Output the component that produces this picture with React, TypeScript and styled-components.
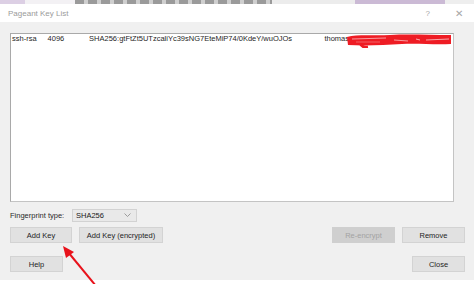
import { FC } from "react";
import styled, { createGlobalStyle } from "styled-components";

const GlobalStyle = createGlobalStyle`
  html, body {
    margin: 0;
    padding: 0;
    background: #ffffff;
  }
  body {
    font-family: "Liberation Sans", Arial, sans-serif;
    -webkit-font-smoothing: antialiased;
  }
`;

type Segment = { width: number; fill: string };

// blurred desktop strip above the dialog
const backdrop: Segment[] = [
  { width: 25, fill: "#dccfe4" },
  { width: 50, fill: "#f3f1f4" },
  {
    width: 197,
    fill: "repeating-linear-gradient(90deg, #9a9a9a 0 9px, #cfcfcf 9px 13px)",
  },
  { width: 83, fill: "#ececec" },
  { width: 90, fill: "#cbbad5" },
  { width: 29, fill: "#eeeeee" },
];

type Key = { type: string; bits: string; fingerprint: string; comment: string };

const keys: Key[] = [
  {
    type: "ssh-rsa",
    bits: "4096",
    fingerprint: "SHA256:gtFtZt5UTzcaliYc39sNG7EteMiP74/0KdeY/wuOJOs",
    comment: "thomas",
  },
];

const Scribble: FC = () => (
  <SScribble width="106" height="14" viewBox="0 0 106 14">
    <path
      d="M1 3 C12 0 28 2 44 1 C62 0 82 1 105 1 L105 10 C88 11 72 9 56 10 C38 11 20 12 2 11 Z"
      fill="#ee1c24"
    />
    <path d="M14 9 Q16 14 22 13" stroke="#ee1c24" strokeWidth="3" fill="none" />
    <path d="M6 5 L40 4" stroke="#ffffff" strokeWidth="0.8" opacity="0.7" />
    <path d="M10 8 L34 8" stroke="#ffffff" strokeWidth="0.6" opacity="0.5" />
    <path d="M48 6 L62 7" stroke="#ffffff" strokeWidth="0.8" opacity="0.7" />
    <path d="M70 5 L74 6" stroke="#ffffff" strokeWidth="0.8" opacity="0.8" />
    <path d="M80 6 L103 5" stroke="#ffffff" strokeWidth="1" opacity="0.6" />
  </SScribble>
);

const Arrow: FC = () => (
  <SOverlay width="474" height="284" viewBox="0 0 474 284">
    <path d="M96 286 L68 252" stroke="#e8121b" strokeWidth="2" />
    <path d="M63 246 L74 252 L66 258 Z" fill="#e8121b" />
  </SOverlay>
);

export default function App() {
  return (
    <>
      <GlobalStyle />
      <SPage>
        <SBackdrop>
          {backdrop.map((s, i) => (
            <SBackdropPiece key={i} $width={s.width} $fill={s.fill} />
          ))}
        </SBackdrop>
        <STitleBar>
          <STitle>Pageant Key List</STitle>
          <STitleControls>
            <STitleGlyph>?</STitleGlyph>
            <STitleGlyph $large>✕</STitleGlyph>
          </STitleControls>
        </STitleBar>
        <SClient>
          <SKeyList>
            {keys.map((k) => (
              <SKeyRow key={k.fingerprint}>
                <SCell $width={36}>{k.type}</SCell>
                <SCell $width={42}>{k.bits}</SCell>
                <SCell $width={238}>{k.fingerprint}</SCell>
                <SCell>
                  {k.comment}
                  <Scribble />
                </SCell>
              </SKeyRow>
            ))}
          </SKeyList>
          <SFingerprintRow>
            <SLabel>Fingerprint type:</SLabel>
            <SSelect>
              <span>SHA256</span>
              <SChevron width="7" height="4" viewBox="0 0 7 4">
                <path d="M0.5 0.5 L3.5 3.5 L6.5 0.5" stroke="#888" strokeWidth="0.8" fill="none" />
              </SChevron>
            </SSelect>
          </SFingerprintRow>
          <SButtonRow $gap={5}>
            <SButton $width={62}>Add Key</SButton>
            <SButton $width={84}>Add Key (encrypted)</SButton>
            <SSpacer />
            <SButton $width={63} disabled>
              Re-encrypt
            </SButton>
            <SButton $width={63}>Remove</SButton>
          </SButtonRow>
          <SButtonRow $gap={13}>
            <SButton $width={53}>Help</SButton>
            <SSpacer />
            <SButton $width={53}>Close</SButton>
          </SButtonRow>
        </SClient>
        <Arrow />
      </SPage>
    </>
  );
}

const SPage = styled.div`
  position: relative;
  width: 474px;
  height: 284px;
  overflow: hidden;
  background: #ffffff;
  display: flex;
  flex-direction: column;
`;

const SBackdrop = styled.div`
  display: flex;
  height: 4px;
`;

const SBackdropPiece = styled.div<{ $width: number; $fill: string }>`
  width: ${(p) => p.$width}px;
  background: ${(p) => p.$fill};
  filter: blur(0.4px);
`;

const STitleBar = styled.div`
  height: 18px;
  display: flex;
  align-items: center;
  justify-content: space-between;
  padding: 0 8px 0 8px;
  background: #ffffff;
`;

const STitle = styled.span`
  font-family: "Liberation Sans", Arial, sans-serif;
  font-size: 8px;
  color: #9b9b9b;
`;

const STitleControls = styled.div`
  display: flex;
  align-items: center;
  gap: 25px;
  padding-right: 3px;
`;

const STitleGlyph = styled.span<{ $large?: boolean }>`
  font-size: ${(p) => (p.$large ? "10px" : "8px")};
  color: #a6a6a6;
  font-weight: 300;
`;

const SClient = styled.div`
  height: 258px;
  box-sizing: border-box;
  background: #f0f0f0;
  padding: 11px 9px 0 10px;
  display: flex;
  flex-direction: column;
`;

const SKeyList = styled.div`
  height: 169px;
  margin-right: 11px;
  box-sizing: border-box;
  background: #ffffff;
  border: 1px solid #c4c4c4;
  border-left-color: #a9a9a9;
  border-top-color: #a9a9a9;
  padding: 0 1px;
`;

const SKeyRow = styled.div`
  display: flex;
  align-items: center;
  height: 9px;
  font-size: 7.5px;
  color: #262626;
`;

const SCell = styled.div<{ $width?: number }>`
  display: flex;
  align-items: center;
  white-space: nowrap;
  ${(p) => (p.$width ? `width: ${p.$width}px;` : "flex: 1;")}
`;

const SScribble = styled.svg`
  display: block;
  margin-left: -3px;
  margin-top: 4px;
  flex-shrink: 0;
`;

const SFingerprintRow = styled.div`
  display: flex;
  align-items: center;
  margin-top: 6px;
  height: 14px;
`;

const SLabel = styled.span`
  width: 62px;
  font-size: 7.5px;
  color: #2a2a2a;
`;

const SSelect = styled.div`
  width: 65px;
  height: 13px;
  box-sizing: border-box;
  display: flex;
  align-items: center;
  justify-content: space-between;
  padding: 0 5px 0 3px;
  background: #e9e9e9;
  border: 1px solid #d2d2d2;
  font-size: 7.5px;
  color: #1a1a1a;
`;

const SChevron = styled.svg`
  display: block;
`;

const SButtonRow = styled.div<{ $gap: number }>`
  display: flex;
  align-items: center;
  gap: 7px;
  margin-top: ${(p) => p.$gap}px;
`;

const SSpacer = styled.div`
  flex: 1;
`;

const SButton = styled.button<{ $width: number }>`
  width: ${(p) => p.$width}px;
  height: 16px;
  box-sizing: border-box;
  margin: 0;
  padding: 0;
  background: #e1e1e1;
  border: 1px solid #d3d3d3;
  border-radius: 0;
  font-family: "Liberation Sans", Arial, sans-serif;
  font-size: 7.5px;
  color: #1e1e1e;

  &:disabled {
    background: #cfcfcf;
    border-color: #cfcfcf;
    color: #a3a3a3;
  }
`;

const SOverlay = styled.svg`
  position: absolute;
  left: 0;
  top: 0;
  pointer-events: none;
`;
